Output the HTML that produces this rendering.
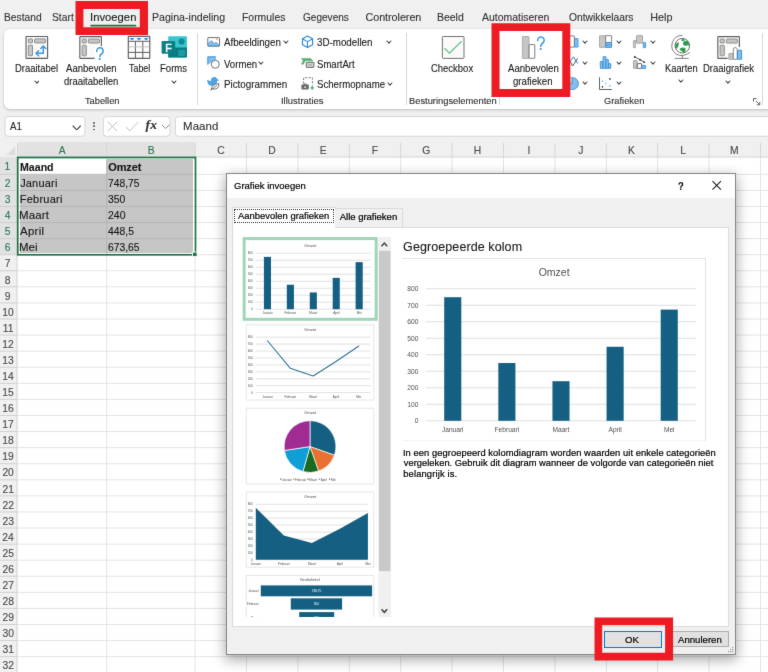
<!DOCTYPE html>
<html lang="nl">
<head>
<meta charset="utf-8">
<title>Grafiek invoegen - Aanbevolen grafieken</title>
<style>
html,body{margin:0;padding:0;}
body{width:768px;height:672px;overflow:hidden;position:relative;background:#f0f0f0;font-family:"Liberation Sans",sans-serif;color:#1c1c1c;}
div,span,svg{position:absolute;box-sizing:border-box;}
.t{white-space:pre;line-height:1;transform-origin:0 0;-webkit-text-stroke:0.12px currentColor;}
#app{left:0;top:0;width:768px;height:672px;overflow:hidden;background:#f0f0f0;will-change:transform;filter:url(#soft);}
.h{-webkit-text-stroke:0.2px currentColor;}

</style>
</head>
<body>
<svg width="0" height="0" style="position:absolute"><defs><filter id="soft" x="0" y="0" width="100%" height="100%" color-interpolation-filters="sRGB"><feConvolveMatrix order="3" kernelMatrix="0.01 0.06 0.01 0.06 0.72 0.06 0.01 0.06 0.01" edgeMode="duplicate" preserveAlpha="true"/></filter></defs></svg>
<div id="app">
<div style="left:0.00px;top:0.00px;width:768.00px;height:29.00px;background:#f0f0f0"></div>
<span class="t" style="left:3.68px;top:12px;font-size:10.8px;transform:scaleX(0.9513);color:#333;">Bestand</span>
<span class="t" style="left:52.04px;top:12px;font-size:10.8px;transform:scaleX(0.9533);color:#333;">Start</span>
<span class="t" style="left:89.69px;top:12px;font-size:10.8px;letter-spacing:0.025px;transform:scaleX(1.0400);color:#1a1a1a;">Invoegen</span>
<span class="t" style="left:151.85px;top:12px;font-size:10.8px;transform:scaleX(0.9817);color:#333;">Pagina-indeling</span>
<span class="t" style="left:241.97px;top:12px;font-size:10.8px;transform:scaleX(0.9642);color:#333;">Formules</span>
<span class="t" style="left:302.80px;top:12px;font-size:10.8px;transform:scaleX(0.9314);color:#333;">Gegevens</span>
<span class="t" style="left:365.46px;top:12px;font-size:10.8px;letter-spacing:-0.053px;color:#333;">Controleren</span>
<span class="t" style="left:437.16px;top:12px;font-size:10.8px;transform:scaleX(0.9694);color:#333;">Beeld</span>
<span class="t" style="left:482.30px;top:12px;font-size:10.8px;transform:scaleX(0.9670);color:#333;">Automatiseren</span>
<span class="t" style="left:568.84px;top:12px;font-size:10.8px;transform:scaleX(0.9513);color:#333;">Ontwikkelaars</span>
<span class="t" style="left:650.14px;top:12px;font-size:10.8px;letter-spacing:0.032px;color:#333;">Help</span>
<svg style="left:88px;top:23px" width="52" height="5" viewBox="88 23 52 5"><rect x="90.2" y="24.85" width="46.2" height="1.6" rx="0.8" fill="#0c7a3d"/></svg>
<div style="left:4.00px;top:28.70px;width:776.00px;height:80.50px;background:#fff;border-radius:6px;box-shadow:0 1px 3px rgba(0,0,0,.22)"></div>
<div style="left:196.80px;top:33.00px;width:1.00px;height:71.50px;background:#d6d6d6"></div>
<div style="left:406.20px;top:33.00px;width:1.00px;height:71.50px;background:#d6d6d6"></div>
<div style="left:499.20px;top:33.00px;width:1.00px;height:71.50px;background:#d6d6d6"></div>
<div style="left:761.80px;top:33.00px;width:1.00px;height:71.50px;background:#d6d6d6"></div>
<span class="t" style="left:15.04px;top:64px;font-size:10.2px;transform:scaleX(0.9258);">Draaitabel</span>
<svg style="left:33.55px;top:79.55px" width="5.90" height="4.10" viewBox="-1 -1 5.90 4.10"><path d="M0 0 L1.95 2.10 L3.90 0" fill="none" stroke="#3a3a3a" stroke-width="1.05" stroke-linecap="round" stroke-linejoin="round"/></svg>
<span class="t" style="left:66.30px;top:64px;font-size:10.2px;transform:scaleX(0.9389);">Aanbevolen</span>
<span class="t" style="left:63.92px;top:77px;font-size:10.2px;transform:scaleX(0.9307);">draaitabellen</span>
<span class="t" style="left:128.52px;top:64px;font-size:10.2px;transform:scaleX(0.8749);">Tabel</span>
<span class="t" style="left:160.23px;top:64px;font-size:10.2px;transform:scaleX(0.9378);">Forms</span>
<svg style="left:170.85px;top:79.55px" width="5.90" height="4.10" viewBox="-1 -1 5.90 4.10"><path d="M0 0 L1.95 2.10 L3.90 0" fill="none" stroke="#3a3a3a" stroke-width="1.05" stroke-linecap="round" stroke-linejoin="round"/></svg>
<span class="t" style="left:85.12px;top:96px;font-size:9.8px;transform:scaleX(0.9437);color:#2e2e2e;">Tabellen</span>
<span class="t" style="left:223.70px;top:38px;font-size:10.2px;transform:scaleX(0.9554);">Afbeeldingen</span>
<svg style="left:282.65px;top:39.75px" width="5.90" height="4.10" viewBox="-1 -1 5.90 4.10"><path d="M0 0 L1.95 2.10 L3.90 0" fill="none" stroke="#3a3a3a" stroke-width="1.05" stroke-linecap="round" stroke-linejoin="round"/></svg>
<span class="t" style="left:223.70px;top:60px;font-size:10.2px;transform:scaleX(0.9413);">Vormen</span>
<svg style="left:258.35px;top:60.75px" width="5.90" height="4.10" viewBox="-1 -1 5.90 4.10"><path d="M0 0 L1.95 2.10 L3.90 0" fill="none" stroke="#3a3a3a" stroke-width="1.05" stroke-linecap="round" stroke-linejoin="round"/></svg>
<span class="t" style="left:223.61px;top:80px;font-size:10.2px;transform:scaleX(0.9624);">Pictogrammen</span>
<span class="t" style="left:317.36px;top:38px;font-size:10.2px;transform:scaleX(0.9605);">3D-modellen</span>
<svg style="left:386.35px;top:39.75px" width="5.90" height="4.10" viewBox="-1 -1 5.90 4.10"><path d="M0 0 L1.95 2.10 L3.90 0" fill="none" stroke="#3a3a3a" stroke-width="1.05" stroke-linecap="round" stroke-linejoin="round"/></svg>
<span class="t" style="left:317.27px;top:60px;font-size:10.2px;transform:scaleX(0.9384);">SmartArt</span>
<span class="t" style="left:317.27px;top:80px;font-size:10.2px;transform:scaleX(0.9462);">Schermopname</span>
<svg style="left:386.65px;top:81.75px" width="5.90" height="4.10" viewBox="-1 -1 5.90 4.10"><path d="M0 0 L1.95 2.10 L3.90 0" fill="none" stroke="#3a3a3a" stroke-width="1.05" stroke-linecap="round" stroke-linejoin="round"/></svg>
<span class="t" style="left:280.85px;top:96px;font-size:9.8px;transform:scaleX(0.9629);color:#2e2e2e;">Illustraties</span>
<span class="t" style="left:431.23px;top:64px;font-size:10.2px;transform:scaleX(0.9297);">Checkbox</span>
<span class="t" style="left:409.25px;top:96px;font-size:9.8px;transform:scaleX(0.9517);color:#2e2e2e;">Besturingselementen</span>
<span class="t" style="left:507.70px;top:64px;font-size:10.2px;transform:scaleX(0.9445);">Aanbevolen</span>
<span class="t" style="left:513.32px;top:77px;font-size:10.2px;transform:scaleX(0.9431);">grafieken</span>
<svg style="left:582.35px;top:39.75px" width="5.90" height="4.10" viewBox="-1 -1 5.90 4.10"><path d="M0 0 L1.95 2.10 L3.90 0" fill="none" stroke="#3a3a3a" stroke-width="1.05" stroke-linecap="round" stroke-linejoin="round"/></svg>
<svg style="left:616.05px;top:39.75px" width="5.90" height="4.10" viewBox="-1 -1 5.90 4.10"><path d="M0 0 L1.95 2.10 L3.90 0" fill="none" stroke="#3a3a3a" stroke-width="1.05" stroke-linecap="round" stroke-linejoin="round"/></svg>
<svg style="left:582.35px;top:60.75px" width="5.90" height="4.10" viewBox="-1 -1 5.90 4.10"><path d="M0 0 L1.95 2.10 L3.90 0" fill="none" stroke="#3a3a3a" stroke-width="1.05" stroke-linecap="round" stroke-linejoin="round"/></svg>
<svg style="left:616.05px;top:60.75px" width="5.90" height="4.10" viewBox="-1 -1 5.90 4.10"><path d="M0 0 L1.95 2.10 L3.90 0" fill="none" stroke="#3a3a3a" stroke-width="1.05" stroke-linecap="round" stroke-linejoin="round"/></svg>
<svg style="left:582.35px;top:81.45px" width="5.90" height="4.10" viewBox="-1 -1 5.90 4.10"><path d="M0 0 L1.95 2.10 L3.90 0" fill="none" stroke="#3a3a3a" stroke-width="1.05" stroke-linecap="round" stroke-linejoin="round"/></svg>
<svg style="left:616.05px;top:81.45px" width="5.90" height="4.10" viewBox="-1 -1 5.90 4.10"><path d="M0 0 L1.95 2.10 L3.90 0" fill="none" stroke="#3a3a3a" stroke-width="1.05" stroke-linecap="round" stroke-linejoin="round"/></svg>
<svg style="left:649.65px;top:39.75px" width="5.90" height="4.10" viewBox="-1 -1 5.90 4.10"><path d="M0 0 L1.95 2.10 L3.90 0" fill="none" stroke="#3a3a3a" stroke-width="1.05" stroke-linecap="round" stroke-linejoin="round"/></svg>
<svg style="left:649.65px;top:60.75px" width="5.90" height="4.10" viewBox="-1 -1 5.90 4.10"><path d="M0 0 L1.95 2.10 L3.90 0" fill="none" stroke="#3a3a3a" stroke-width="1.05" stroke-linecap="round" stroke-linejoin="round"/></svg>
<span class="t" style="left:604.23px;top:96px;font-size:9.8px;transform:scaleX(0.9493);color:#2e2e2e;">Grafieken</span>
<span class="t" style="left:664.96px;top:64px;font-size:10.2px;transform:scaleX(0.9129);">Kaarten</span>
<svg style="left:678.05px;top:79.35px" width="5.90" height="4.10" viewBox="-1 -1 5.90 4.10"><path d="M0 0 L1.95 2.10 L3.90 0" fill="none" stroke="#3a3a3a" stroke-width="1.05" stroke-linecap="round" stroke-linejoin="round"/></svg>
<span class="t" style="left:702.54px;top:64px;font-size:10.2px;transform:scaleX(0.9295);">Draaigrafiek</span>
<svg style="left:725.05px;top:79.95px" width="5.90" height="4.10" viewBox="-1 -1 5.90 4.10"><path d="M0 0 L1.95 2.10 L3.90 0" fill="none" stroke="#3a3a3a" stroke-width="1.05" stroke-linecap="round" stroke-linejoin="round"/></svg>
<svg style="left:752.5px;top:98px" width="8" height="8" viewBox="0 0 8 8"><path d="M0.5 3.5V0.5H3.5 M3 3l3.6 3.6 M6.8 3.8v3h-3" fill="none" stroke="#555" stroke-width="0.9"/></svg>
<svg style="left:0;top:0" width="768" height="112" viewBox="0 0 768 112"><rect x="26.05" y="36.45" width="21.55" height="21.85" rx="0.6" fill="#fafafa" stroke="#5e5e5e" stroke-width="1.15"/><rect x="28.30" y="38.90" width="4.20" height="4.00" rx="0.6" fill="#c8c6c4" stroke="#868482" stroke-width="0.9"/><rect x="34.60" y="38.90" width="11.00" height="4.00" rx="0.6" fill="#c8c6c4" stroke="#868482" stroke-width="0.9"/><rect x="28.30" y="45.30" width="4.20" height="10.40" rx="0.6" fill="#c8c6c4" stroke="#868482" stroke-width="0.9"/><path d="M36 53.3 H43.3 V46.2 M38.6 50.8 L36 53.3 L38.6 55.8 M40.8 48.6 L43.3 46.1 L45.8 48.6" fill="none" stroke="#3a96dd" stroke-width="1.45" stroke-linecap="round" stroke-linejoin="round"/><rect x="79.85" y="36.55" width="21.55" height="21.85" rx="0.6" fill="#fafafa" stroke="#5e5e5e" stroke-width="1.15"/><rect x="82.10" y="39.00" width="4.20" height="4.00" rx="0.6" fill="#c8c6c4" stroke="#868482" stroke-width="0.9"/><rect x="88.40" y="39.00" width="11.00" height="4.00" rx="0.6" fill="#c8c6c4" stroke="#868482" stroke-width="0.9"/><rect x="82.10" y="45.40" width="4.20" height="10.40" rx="0.6" fill="#c8c6c4" stroke="#868482" stroke-width="0.9"/><rect x="94.60" y="46.00" width="10.40" height="14.60" rx="0" fill="#fff"/><path d="M96.75 51.40 A3.25 3.25 0 1 1 102.34 53.14 Q100.00 54.72 99.70 56.57" fill="none" stroke="#3a96dd" stroke-width="1.5" stroke-linecap="round"/><circle cx="99.70" cy="59.10" r="1.05" fill="#3a96dd"/><rect x="128.30" y="36.40" width="21.50" height="21.90" rx="0.5" fill="#fdfdfd" stroke="#5e5e5e" stroke-width="1.15"/><path d="M135.4 41.3 V58.3" fill="none" stroke="#5e5e5e" stroke-width="1.0" /><path d="M142.8 41.3 V58.3" fill="none" stroke="#5e5e5e" stroke-width="1.0" /><path d="M128.3 41.3 H149.8" fill="none" stroke="#5e5e5e" stroke-width="1.0" /><path d="M128.3 52.4 H149.8" fill="none" stroke="#5e5e5e" stroke-width="1.0" /><path d="M128.8 46.85 H149.3" fill="none" stroke="#bdbdbd" stroke-width="0.9" /><path d="M129.5 37.9 H134.5 L132 40.4 Z" fill="#2b88d8" /><path d="M136.5 37.9 H141.5 L139 40.4 Z" fill="#2b88d8" /><path d="M143.6 37.9 H148.6 L146.1 40.4 Z" fill="#2b88d8" /><rect x="168.20" y="36.20" width="18.80" height="21.40" rx="1.2" fill="#38c6d1"/><path d="M168.2 47.4 H187 V56.4 Q187 57.6 185.8 57.6 H169.4 Q168.2 57.6 168.2 56.4 Z" fill="#077d82" /><circle cx="181.6" cy="41.6" r="3.1" fill="#0f8a90"/><rect x="178.30" y="49.80" width="6.80" height="6.10" rx="0.3" fill="#1b9da3"/><rect x="161.60" y="41.00" width="13.60" height="12.70" rx="1.2" fill="#0b7f85"/><text x="168.4" y="51.5" font-size="10.5" font-weight="400" stroke="#fff" stroke-width="0.45" fill="#fff" text-anchor="middle" font-family="Liberation Sans, sans-serif">F</text><rect x="207.80" y="37.60" width="11.70" height="8.60" rx="0.5" fill="#fff" stroke="#5c5c5c" stroke-width="0.9"/><path d="M208.3 45.7 V43.4 L211.2 40.5 L214.4 43.6 L216 42.2 L219 45 V45.7 Z" fill="#83beec" stroke="#2b88d8" stroke-width="0.6" stroke-linejoin="round"/><circle cx="216.9" cy="39.4" r="0.8" fill="#f7894a"/><path d="M207.8 64.5 V56.8 H215.9 V60" fill="#83beec" /><path d="M207.8 64.7 V56.8 H215.9" fill="none" stroke="#2b88d8" stroke-width="0.9" /><circle cx="215.3" cy="64.3" r="4" fill="#fff" stroke="#6a6a6a" stroke-width="0.95"/><path d="M207.6 80.2 Q208.8 81.6 211.4 81.2 Q211 77.4 214.4 77.3 Q216.8 77.4 216.9 79.4 L218.6 79.9 L216.8 81 Q216.6 85.6 212.2 85.6 Q207.6 85.6 207.6 80.2 Z" fill="#4fa3e3" stroke="#2b88d8" stroke-width="0.5" stroke-linejoin="round"/><path d="M211.3 89.6 Q211.2 84.2 218.9 83.6 Q219.2 89.8 212.6 89 Z" fill="#fff" stroke="#5a5a5a" stroke-width="0.85" stroke-linejoin="round"/><path d="M210.6 90.2 L216.6 85.6" fill="none" stroke="#5a5a5a" stroke-width="0.8" stroke-linecap="round"/><path d="M307.5 36.1 L312.6 38.8 V44.8 L307.5 47.6 L302.5 44.8 V38.8 Z" fill="#fff" stroke="#2b88d8" stroke-width="1.15" stroke-linejoin="round"/><path d="M302.7 39 L307.5 41.6 L312.4 39 M307.5 41.6 V47.3" fill="none" stroke="#2b88d8" stroke-width="1.05" stroke-linejoin="round"/><path d="M301.4 58.4 H310.6 L313 60.8 H305.2 L303.4 64.2 H301.4 L303.2 60.8 Z" fill="#55b36f" stroke="#3b9a56" stroke-width="0.4" stroke-linejoin="round"/><rect x="306.30" y="62.30" width="7.60" height="5.10" rx="0.5" fill="#d6d4d2" stroke="#5a5a5a" stroke-width="0.9"/><path d="M308.4 64.9 H311.8" fill="none" stroke="#777" stroke-width="0.7" /><path d="M303.6 83.6 V77.7 H312.4 V85.4" fill="none" stroke="#666" stroke-width="0.85" stroke-dasharray="2.2 1.4"/><rect x="301.40" y="84.60" width="7.40" height="5.00" rx="0.8" fill="#6a6a6a"/><path d="M303.4 84.7 L304 83.6 H306.2 L306.8 84.7 Z" fill="#6a6a6a" /><circle cx="305.1" cy="87.1" r="1.45" fill="#d8d8d8" stroke="#444" stroke-width="0.5"/><path d="M312.2 86.1 V89.7 M310.4 87.9 H314" fill="none" stroke="#4caf6e" stroke-width="1.3" /><rect x="442.40" y="36.50" width="21.60" height="21.90" rx="0.8" fill="#fafafa" stroke="#737373" stroke-width="1.0"/><path d="M444.7 48.6 L449.5 53.3 L461.3 41.6" fill="none" stroke="#6fc690" stroke-width="1.35" stroke-linecap="round" stroke-linejoin="round"/><rect x="522.40" y="36.50" width="6.60" height="21.90" rx="0.5" fill="#c8c6c4" stroke="#a3a19f" stroke-width="0.8"/><rect x="529.10" y="44.60" width="5.70" height="13.70" rx="0.4" fill="#fff" stroke="#6e6e6e" stroke-width="0.9"/><path d="M537.75 40.70 A3.25 3.25 0 1 1 543.34 42.44 Q541.00 44.44 540.70 46.39" fill="none" stroke="#3a96dd" stroke-width="1.5" stroke-linecap="round"/><circle cx="540.70" cy="49.10" r="1.05" fill="#3a96dd"/><rect x="568.50" y="35.90" width="5.90" height="11.20" rx="0.3" fill="#fff" stroke="#6e6e6e" stroke-width="0.9"/><rect x="574.50" y="38.60" width="3.50" height="8.50" rx="0.3" fill="#83beec" stroke="#2b88d8" stroke-width="0.8"/><path d="M569.6 62.4 L573.4 56.8 L577.8 63.6" fill="none" stroke="#2b88d8" stroke-width="1.0" stroke-linejoin="round"/><path d="M569.8 60.6 L572.6 66 L577.6 58.4" fill="none" stroke="#444" stroke-width="0.9" stroke-linejoin="round"/><path d="M572.4 83.6 V77.6 A6 6 0 1 1 566.4 83.6 Z" fill="#83beec" stroke="#2b88d8" stroke-width="0.8" /><path d="M571.2 82.4 V77 A5.6 5.6 0 0 0 566 82.4 Z" fill="#e8e8e8" stroke="#777" stroke-width="0.7" /><rect x="599.50" y="35.70" width="6.00" height="11.70" rx="0.4" fill="#c8c6c4" stroke="#a3a19f" stroke-width="0.8"/><rect x="605.60" y="35.70" width="6.00" height="6.80" rx="0.3" fill="#fff" stroke="#6e6e6e" stroke-width="0.85"/><rect x="605.60" y="42.60" width="6.00" height="4.80" rx="0.3" fill="#83beec" stroke="#2b88d8" stroke-width="0.85"/><path d="M605.6 45 H611.6" fill="none" stroke="#2b88d8" stroke-width="0.7" /><rect x="600.30" y="61.40" width="2.70" height="7.00" rx="0.4" fill="#83beec" stroke="#2b88d8" stroke-width="0.8"/><rect x="603.00" y="56.60" width="2.90" height="11.80" rx="0.4" fill="#83beec" stroke="#2b88d8" stroke-width="0.8"/><rect x="605.90" y="59.40" width="2.50" height="9.00" rx="0.4" fill="#83beec" stroke="#2b88d8" stroke-width="0.8"/><rect x="608.40" y="63.60" width="2.40" height="4.80" rx="0.4" fill="#83beec" stroke="#2b88d8" stroke-width="0.8"/><path d="M599.5 77.2 V89.5 H611.9" fill="none" stroke="#5a5a5a" stroke-width="0.95" /><circle cx="609.9" cy="78.9" r="0.85" fill="#333"/><circle cx="602.5" cy="86.8" r="0.85" fill="#333"/><circle cx="602.5" cy="81.1" r="0.85" fill="#83beec"/><circle cx="605.8" cy="83.5" r="0.85" fill="#83beec"/><circle cx="609.9" cy="85.9" r="0.85" fill="#83beec"/><rect x="633.40" y="40.50" width="2.20" height="7.20" rx="0.3" fill="#c8c6c4" stroke="#9a9896" stroke-width="0.7"/><rect x="636.50" y="35.60" width="6.10" height="7.60" rx="0.5" fill="#c8c6c4" stroke="#9a9896" stroke-width="0.8"/><path d="M635.6 40.5 H637" fill="none" stroke="#9a9896" stroke-width="0.7" /><rect x="643.30" y="42.50" width="2.30" height="5.20" rx="0.4" fill="#83beec" stroke="#2b88d8" stroke-width="0.8"/><rect x="633.50" y="60.60" width="3.60" height="7.80" rx="0.3" fill="#c8c6c4" stroke="#9a9896" stroke-width="0.8"/><rect x="637.30" y="63.60" width="4.30" height="4.80" rx="0.3" fill="#fff" stroke="#5a5a5a" stroke-width="0.9"/><rect x="641.80" y="65.40" width="3.90" height="3.00" rx="0.3" fill="#83beec" stroke="#2b88d8" stroke-width="0.8"/><path d="M634.8 57 L640 59.7 L644.2 62.1" fill="none" stroke="#333" stroke-width="0.8" /><circle cx="634.8" cy="57" r="0.95" fill="#333"/><circle cx="640" cy="59.7" r="0.95" fill="#333"/><circle cx="644.2" cy="62.1" r="0.95" fill="#333"/><circle cx="682.3" cy="45.7" r="7.3" fill="#fff" stroke="#6a6a6a" stroke-width="1.0"/><path d="M675.2 45.8 Q675.6 43 678.8 42 Q679.2 44.6 678 46.8 Q677 49.2 676.2 48.6 Q675.2 47.4 675.2 45.8 Z" fill="#2f9c4c" /><path d="M681.8 38.7 Q685 38.4 684.6 40.4 Q683.2 41.8 681.6 40.8 Z" fill="#2f9c4c" /><path d="M683.2 42.2 Q685.6 39.8 688 41.4 Q689.6 43.6 689.4 46 Q687.6 44.6 686 45.8 Q683.8 46 683 44.2 Z" fill="#2f9c4c" /><path d="M679.6 48.8 Q682.6 46.8 685.4 48.2 Q686.4 50.2 684.6 52.8 Q683 53.2 682.2 51.6 Q680 50.8 679.6 48.8 Z" fill="#2f9c4c" /><path d="M682 35.3 A10.4 10.4 0 0 0 676 54 Q682.4 57.8 689.7 52.6" fill="none" stroke="#7a7a7a" stroke-width="0.95" stroke-linecap="round"/><path d="M682.3 55.6 V58.4 M675.2 58.4 H688.3" fill="none" stroke="#7a7a7a" stroke-width="0.95" stroke-linecap="round"/><rect x="717.85" y="36.55" width="21.55" height="21.85" rx="0.6" fill="#fafafa" stroke="#5e5e5e" stroke-width="1.15"/><rect x="720.10" y="39.00" width="4.20" height="4.00" rx="0.6" fill="#c8c6c4" stroke="#868482" stroke-width="0.9"/><rect x="726.40" y="39.00" width="11.00" height="4.00" rx="0.6" fill="#c8c6c4" stroke="#868482" stroke-width="0.9"/><rect x="720.10" y="45.40" width="4.20" height="10.40" rx="0.6" fill="#c8c6c4" stroke="#868482" stroke-width="0.9"/><rect x="727.60" y="46.60" width="15.00" height="13.80" rx="0" fill="#fff"/><rect x="728.80" y="53.50" width="4.20" height="5.80" rx="0.4" fill="#c8c6c4" stroke="#9a9896" stroke-width="0.8"/><path d="M733.3 59.3 V49.4 Q733.3 47.6 735.2 47.6 Q737.2 47.6 737.2 49.4 V59.3 Z" fill="#fff" stroke="#7a7a7a" stroke-width="0.9" /><rect x="737.60" y="50.20" width="4.00" height="9.10" rx="0.5" fill="#83beec" stroke="#2b88d8" stroke-width="0.9"/><path d="M739.4 46.6 V45" fill="none" stroke="#5e5e5e" stroke-width="0.95" /></svg>
<svg style="left:0;top:112px" width="768" height="30" viewBox="0 112 768 30"><rect x="5.00" y="116.60" width="79.90" height="19.65" rx="3" fill="#fff" stroke="#d6d6d6" stroke-width="1"/><rect x="103.30" y="116.60" width="66.60" height="19.65" rx="3" fill="#fff" stroke="#d6d6d6" stroke-width="1"/><rect x="175.40" y="116.60" width="614.10" height="19.65" rx="3" fill="#fff" stroke="#d6d6d6" stroke-width="1"/></svg>
<span class="t" style="left:9.50px;top:121px;font-size:11px;transform:scaleX(0.8805);color:#262626;">A1</span>
<svg style="left:72.10px;top:124.55px" width="9.40" height="5.90" viewBox="-1 -1 9.40 5.90"><path d="M0 0 L3.70 3.90 L7.40 0" fill="none" stroke="#444" stroke-width="1.1" stroke-linecap="round" stroke-linejoin="round"/></svg>
<div style="left:93.30px;top:122.00px;width:1.50px;height:1.50px;background:#555;border-radius:1px"></div>
<div style="left:93.30px;top:125.40px;width:1.50px;height:1.50px;background:#555;border-radius:1px"></div>
<div style="left:93.30px;top:128.80px;width:1.50px;height:1.50px;background:#555;border-radius:1px"></div>
<svg style="left:107px;top:121px" width="11" height="11" viewBox="0 0 11 11"><path d="M0.8 0.8 L10.2 10.2 M10.2 0.8 L0.8 10.2" stroke="#c2c2c2" stroke-width="1" fill="none"/></svg>
<svg style="left:125px;top:121px" width="14" height="11" viewBox="0 0 14 11"><path d="M0.8 5.8 L4.8 9.8 L13.2 1" stroke="#c2c2c2" stroke-width="1" fill="none"/></svg>
<span class="t" style="left:145.6px;top:118px;font-family:'Liberation Serif',serif;font-style:italic;font-weight:700;font-size:13.5px;color:#333;letter-spacing:0.2px">fx</span>
<svg style="left:160.50px;top:123.80px" width="9.00" height="5.60" viewBox="-1 -1 9.00 5.60"><path d="M0 0 L3.50 3.60 L7.00 0" fill="none" stroke="#8a8a8a" stroke-width="1" stroke-linecap="round" stroke-linejoin="round"/></svg>
<span class="t" style="left:182.78px;top:121px;font-size:11px;letter-spacing:0.105px;transform:scaleX(1.0400);color:#303030;">Maand</span>
<div style="left:0.00px;top:142.30px;width:768.00px;height:529.70px;background:#fff"></div>
<div style="left:0.00px;top:142.30px;width:768.00px;height:15.00px;background:#f0f0f0"></div>
<div style="left:17.50px;top:142.30px;width:177.60px;height:15.00px;background:#e2e2e2"></div>
<div style="left:0.00px;top:157.30px;width:17.40px;height:514.70px;background:#f0f0f0"></div>
<div style="left:0.00px;top:157.30px;width:17.40px;height:97.39px;background:#e2e2e2"></div>
<svg style="left:5px;top:145px" width="12" height="11" viewBox="5 145 12 11"><path d="M15.4 146 V155.2 H6.2 Z" fill="#dddddd"/></svg>
<div style="left:19.60px;top:174.70px;width:173.80px;height:78.80px;background:#c6c6c6"></div>
<div style="left:107.20px;top:159.15px;width:86.20px;height:15.65px;background:#c6c6c6"></div>
<svg style="left:0;top:0" width="768" height="672" viewBox="0 0 768 672" stroke-width="1"><line x1="0" y1="174.30" x2="17" y2="174.30" stroke="#d0d0d0"/><line x1="19.6" y1="174.30" x2="193.4" y2="174.30" stroke="#b6b6b6"/><line x1="196" y1="174.30" x2="768" y2="174.30" stroke="#e4e4e4"/><line x1="0" y1="190.38" x2="17" y2="190.38" stroke="#d0d0d0"/><line x1="19.6" y1="190.38" x2="193.4" y2="190.38" stroke="#b6b6b6"/><line x1="196" y1="190.38" x2="768" y2="190.38" stroke="#e4e4e4"/><line x1="0" y1="206.46" x2="17" y2="206.46" stroke="#d0d0d0"/><line x1="19.6" y1="206.46" x2="193.4" y2="206.46" stroke="#b6b6b6"/><line x1="196" y1="206.46" x2="768" y2="206.46" stroke="#e4e4e4"/><line x1="0" y1="222.54" x2="17" y2="222.54" stroke="#d0d0d0"/><line x1="19.6" y1="222.54" x2="193.4" y2="222.54" stroke="#b6b6b6"/><line x1="196" y1="222.54" x2="768" y2="222.54" stroke="#e4e4e4"/><line x1="0" y1="238.62" x2="17" y2="238.62" stroke="#d0d0d0"/><line x1="19.6" y1="238.62" x2="193.4" y2="238.62" stroke="#b6b6b6"/><line x1="196" y1="238.62" x2="768" y2="238.62" stroke="#e4e4e4"/><line x1="0" y1="254.69" x2="17" y2="254.69" stroke="#d0d0d0"/><line x1="17.4" y1="254.69" x2="768" y2="254.69" stroke="#e4e4e4"/><line x1="0" y1="270.77" x2="17" y2="270.77" stroke="#d0d0d0"/><line x1="17.4" y1="270.77" x2="768" y2="270.77" stroke="#e4e4e4"/><line x1="0" y1="286.85" x2="17" y2="286.85" stroke="#d0d0d0"/><line x1="17.4" y1="286.85" x2="768" y2="286.85" stroke="#e4e4e4"/><line x1="0" y1="302.93" x2="17" y2="302.93" stroke="#d0d0d0"/><line x1="17.4" y1="302.93" x2="768" y2="302.93" stroke="#e4e4e4"/><line x1="0" y1="319.01" x2="17" y2="319.01" stroke="#d0d0d0"/><line x1="17.4" y1="319.01" x2="768" y2="319.01" stroke="#e4e4e4"/><line x1="0" y1="335.09" x2="17" y2="335.09" stroke="#d0d0d0"/><line x1="17.4" y1="335.09" x2="768" y2="335.09" stroke="#e4e4e4"/><line x1="0" y1="351.17" x2="17" y2="351.17" stroke="#d0d0d0"/><line x1="17.4" y1="351.17" x2="768" y2="351.17" stroke="#e4e4e4"/><line x1="0" y1="367.25" x2="17" y2="367.25" stroke="#d0d0d0"/><line x1="17.4" y1="367.25" x2="768" y2="367.25" stroke="#e4e4e4"/><line x1="0" y1="383.33" x2="17" y2="383.33" stroke="#d0d0d0"/><line x1="17.4" y1="383.33" x2="768" y2="383.33" stroke="#e4e4e4"/><line x1="0" y1="399.40" x2="17" y2="399.40" stroke="#d0d0d0"/><line x1="17.4" y1="399.40" x2="768" y2="399.40" stroke="#e4e4e4"/><line x1="0" y1="415.48" x2="17" y2="415.48" stroke="#d0d0d0"/><line x1="17.4" y1="415.48" x2="768" y2="415.48" stroke="#e4e4e4"/><line x1="0" y1="431.56" x2="17" y2="431.56" stroke="#d0d0d0"/><line x1="17.4" y1="431.56" x2="768" y2="431.56" stroke="#e4e4e4"/><line x1="0" y1="447.64" x2="17" y2="447.64" stroke="#d0d0d0"/><line x1="17.4" y1="447.64" x2="768" y2="447.64" stroke="#e4e4e4"/><line x1="0" y1="463.72" x2="17" y2="463.72" stroke="#d0d0d0"/><line x1="17.4" y1="463.72" x2="768" y2="463.72" stroke="#e4e4e4"/><line x1="0" y1="479.80" x2="17" y2="479.80" stroke="#d0d0d0"/><line x1="17.4" y1="479.80" x2="768" y2="479.80" stroke="#e4e4e4"/><line x1="0" y1="495.88" x2="17" y2="495.88" stroke="#d0d0d0"/><line x1="17.4" y1="495.88" x2="768" y2="495.88" stroke="#e4e4e4"/><line x1="0" y1="511.96" x2="17" y2="511.96" stroke="#d0d0d0"/><line x1="17.4" y1="511.96" x2="768" y2="511.96" stroke="#e4e4e4"/><line x1="0" y1="528.04" x2="17" y2="528.04" stroke="#d0d0d0"/><line x1="17.4" y1="528.04" x2="768" y2="528.04" stroke="#e4e4e4"/><line x1="0" y1="544.12" x2="17" y2="544.12" stroke="#d0d0d0"/><line x1="17.4" y1="544.12" x2="768" y2="544.12" stroke="#e4e4e4"/><line x1="0" y1="560.20" x2="17" y2="560.20" stroke="#d0d0d0"/><line x1="17.4" y1="560.20" x2="768" y2="560.20" stroke="#e4e4e4"/><line x1="0" y1="576.27" x2="17" y2="576.27" stroke="#d0d0d0"/><line x1="17.4" y1="576.27" x2="768" y2="576.27" stroke="#e4e4e4"/><line x1="0" y1="592.35" x2="17" y2="592.35" stroke="#d0d0d0"/><line x1="17.4" y1="592.35" x2="768" y2="592.35" stroke="#e4e4e4"/><line x1="0" y1="608.43" x2="17" y2="608.43" stroke="#d0d0d0"/><line x1="17.4" y1="608.43" x2="768" y2="608.43" stroke="#e4e4e4"/><line x1="0" y1="624.51" x2="17" y2="624.51" stroke="#d0d0d0"/><line x1="17.4" y1="624.51" x2="768" y2="624.51" stroke="#e4e4e4"/><line x1="0" y1="640.59" x2="17" y2="640.59" stroke="#d0d0d0"/><line x1="17.4" y1="640.59" x2="768" y2="640.59" stroke="#e4e4e4"/><line x1="0" y1="656.67" x2="17" y2="656.67" stroke="#d0d0d0"/><line x1="17.4" y1="656.67" x2="768" y2="656.67" stroke="#e4e4e4"/><line x1="0" y1="672.75" x2="17" y2="672.75" stroke="#d0d0d0"/><line x1="17.4" y1="672.75" x2="768" y2="672.75" stroke="#e4e4e4"/><line x1="17.50" y1="143" x2="17.50" y2="157" stroke="#d6d6d6"/><line x1="106.70" y1="143" x2="106.70" y2="157" stroke="#d6d6d6"/><line x1="106.70" y1="159.15" x2="106.70" y2="253.79" stroke="#b6b6b6"/><line x1="106.70" y1="255.69" x2="106.70" y2="672" stroke="#e4e4e4"/><line x1="195.10" y1="143" x2="195.10" y2="157" stroke="#d6d6d6"/><line x1="195.10" y1="255.69" x2="195.10" y2="672" stroke="#e4e4e4"/><line x1="246.50" y1="143" x2="246.50" y2="157" stroke="#d6d6d6"/><line x1="246.50" y1="157" x2="246.50" y2="672" stroke="#e4e4e4"/><line x1="297.90" y1="143" x2="297.90" y2="157" stroke="#d6d6d6"/><line x1="297.90" y1="157" x2="297.90" y2="672" stroke="#e4e4e4"/><line x1="349.30" y1="143" x2="349.30" y2="157" stroke="#d6d6d6"/><line x1="349.30" y1="157" x2="349.30" y2="672" stroke="#e4e4e4"/><line x1="400.70" y1="143" x2="400.70" y2="157" stroke="#d6d6d6"/><line x1="400.70" y1="157" x2="400.70" y2="672" stroke="#e4e4e4"/><line x1="452.10" y1="143" x2="452.10" y2="157" stroke="#d6d6d6"/><line x1="452.10" y1="157" x2="452.10" y2="672" stroke="#e4e4e4"/><line x1="503.50" y1="143" x2="503.50" y2="157" stroke="#d6d6d6"/><line x1="503.50" y1="157" x2="503.50" y2="672" stroke="#e4e4e4"/><line x1="554.90" y1="143" x2="554.90" y2="157" stroke="#d6d6d6"/><line x1="554.90" y1="157" x2="554.90" y2="672" stroke="#e4e4e4"/><line x1="606.30" y1="143" x2="606.30" y2="157" stroke="#d6d6d6"/><line x1="606.30" y1="157" x2="606.30" y2="672" stroke="#e4e4e4"/><line x1="657.70" y1="143" x2="657.70" y2="157" stroke="#d6d6d6"/><line x1="657.70" y1="157" x2="657.70" y2="672" stroke="#e4e4e4"/><line x1="709.10" y1="143" x2="709.10" y2="157" stroke="#d6d6d6"/><line x1="709.10" y1="157" x2="709.10" y2="672" stroke="#e4e4e4"/><line x1="760.50" y1="143" x2="760.50" y2="157" stroke="#d6d6d6"/><line x1="760.50" y1="157" x2="760.50" y2="672" stroke="#e4e4e4"/><line x1="811.90" y1="143" x2="811.90" y2="157" stroke="#d6d6d6"/><line x1="811.90" y1="157" x2="811.90" y2="672" stroke="#e4e4e4"/><line x1="17.4" y1="157" x2="768" y2="157" stroke="#d4d4d4"/><line x1="17" y1="157" x2="17" y2="672" stroke="#d0d0d0"/></svg>
<span class="t" style="left:58.85px;top:146px;font-size:10.3px;color:#257a52;">A</span>
<span class="t" style="left:147.72px;top:146px;font-size:10.3px;color:#257a52;">B</span>
<span class="t" style="left:217.21px;top:146px;font-size:10.3px;color:#4a4a4a;">C</span>
<span class="t" style="left:268.31px;top:146px;font-size:10.3px;color:#4a4a4a;">D</span>
<span class="t" style="left:319.87px;top:146px;font-size:10.3px;color:#4a4a4a;">E</span>
<span class="t" style="left:371.63px;top:146px;font-size:10.3px;color:#4a4a4a;">F</span>
<span class="t" style="left:422.31px;top:146px;font-size:10.3px;color:#4a4a4a;">G</span>
<span class="t" style="left:473.87px;top:146px;font-size:10.3px;color:#4a4a4a;">H</span>
<span class="t" style="left:527.56px;top:146px;font-size:10.3px;color:#4a4a4a;">I</span>
<span class="t" style="left:578.21px;top:146px;font-size:10.3px;color:#4a4a4a;">J</span>
<span class="t" style="left:627.89px;top:146px;font-size:10.3px;color:#4a4a4a;">K</span>
<span class="t" style="left:680.18px;top:146px;font-size:10.3px;color:#4a4a4a;">L</span>
<span class="t" style="left:730.00px;top:146px;font-size:10.3px;color:#4a4a4a;">M</span>
<span class="t" style="left:4.59px;top:162px;font-size:10.3px;color:#257a52;">1</span>
<span class="t" style="left:4.72px;top:179px;font-size:10.3px;color:#257a52;">2</span>
<span class="t" style="left:4.77px;top:195px;font-size:10.3px;color:#257a52;">3</span>
<span class="t" style="left:4.77px;top:211px;font-size:10.3px;color:#257a52;">4</span>
<span class="t" style="left:4.74px;top:227px;font-size:10.3px;color:#257a52;">5</span>
<span class="t" style="left:4.69px;top:243px;font-size:10.3px;color:#257a52;">6</span>
<span class="t" style="left:4.72px;top:259px;font-size:10.3px;color:#4a4a4a;">7</span>
<span class="t" style="left:4.74px;top:276px;font-size:10.3px;color:#4a4a4a;">8</span>
<span class="t" style="left:4.74px;top:292px;font-size:10.3px;color:#4a4a4a;">9</span>
<span class="t" style="left:2.27px;top:308px;font-size:10.3px;color:#4a4a4a;">10</span>
<span class="t" style="left:2.71px;top:324px;font-size:10.3px;color:#4a4a4a;">11</span>
<span class="t" style="left:2.32px;top:340px;font-size:10.3px;color:#4a4a4a;">12</span>
<span class="t" style="left:2.30px;top:356px;font-size:10.3px;color:#4a4a4a;">13</span>
<span class="t" style="left:2.22px;top:372px;font-size:10.3px;color:#4a4a4a;">14</span>
<span class="t" style="left:2.30px;top:388px;font-size:10.3px;color:#4a4a4a;">15</span>
<span class="t" style="left:2.30px;top:404px;font-size:10.3px;color:#4a4a4a;">16</span>
<span class="t" style="left:2.32px;top:420px;font-size:10.3px;color:#4a4a4a;">17</span>
<span class="t" style="left:2.30px;top:436px;font-size:10.3px;color:#4a4a4a;">18</span>
<span class="t" style="left:2.32px;top:452px;font-size:10.3px;color:#4a4a4a;">19</span>
<span class="t" style="left:2.40px;top:468px;font-size:10.3px;color:#4a4a4a;">20</span>
<span class="t" style="left:2.45px;top:485px;font-size:10.3px;color:#4a4a4a;">21</span>
<span class="t" style="left:2.45px;top:501px;font-size:10.3px;color:#4a4a4a;">22</span>
<span class="t" style="left:2.43px;top:517px;font-size:10.3px;color:#4a4a4a;">23</span>
<span class="t" style="left:2.35px;top:533px;font-size:10.3px;color:#4a4a4a;">24</span>
<span class="t" style="left:2.43px;top:549px;font-size:10.3px;color:#4a4a4a;">25</span>
<span class="t" style="left:2.43px;top:565px;font-size:10.3px;color:#4a4a4a;">26</span>
<span class="t" style="left:2.45px;top:581px;font-size:10.3px;color:#4a4a4a;">27</span>
<span class="t" style="left:2.43px;top:597px;font-size:10.3px;color:#4a4a4a;">28</span>
<span class="t" style="left:2.45px;top:613px;font-size:10.3px;color:#4a4a4a;">29</span>
<span class="t" style="left:2.48px;top:629px;font-size:10.3px;color:#4a4a4a;">30</span>
<span class="t" style="left:2.53px;top:645px;font-size:10.3px;color:#4a4a4a;">31</span>
<span class="t" style="left:2.53px;top:661px;font-size:10.3px;color:#4a4a4a;">32</span>
<span class="t" style="left:19.71px;top:162px;font-size:11px;transform:scaleX(0.9641);color:#161616;font-weight:700;">Maand</span>
<span class="t" style="left:108.16px;top:162px;font-size:11px;letter-spacing:-0.072px;color:#161616;font-weight:700;">Omzet</span>
<span class="t" style="left:20.14px;top:178px;font-size:11px;letter-spacing:0.188px;color:#161616;">Januari</span>
<span class="t" style="left:108.08px;top:178px;font-size:11px;transform:scaleX(0.9374);color:#161616;">748,75</span>
<span class="t" style="left:19.82px;top:194px;font-size:11px;letter-spacing:0.223px;color:#161616;">Februari</span>
<span class="t" style="left:108.24px;top:194px;font-size:11px;transform:scaleX(0.9448);color:#161616;">350</span>
<span class="t" style="left:19.38px;top:210px;font-size:11px;letter-spacing:0.194px;transform:scaleX(1.0400);color:#161616;">Maart</span>
<span class="t" style="left:108.08px;top:210px;font-size:11px;transform:scaleX(0.9537);color:#161616;">240</span>
<span class="t" style="left:20.10px;top:226px;font-size:11px;letter-spacing:0.271px;transform:scaleX(1.0400);color:#161616;">April</span>
<span class="t" style="left:108.39px;top:226px;font-size:11px;transform:scaleX(0.9421);color:#161616;">448,5</span>
<span class="t" style="left:19.38px;top:242px;font-size:11px;letter-spacing:0.072px;transform:scaleX(1.0400);color:#161616;">Mei</span>
<span class="t" style="left:108.08px;top:242px;font-size:11px;transform:scaleX(0.9374);color:#161616;">673,65</span>
<svg style="left:0;top:150px" width="210" height="115" viewBox="0 150 210 115"><rect x="17.75" y="157.5" width="177.75" height="97.3" fill="none" stroke="#1e7346" stroke-width="1.7"/><rect x="192.6" y="252.1" width="4.5" height="4.5" fill="#1e7346" stroke="#fff" stroke-width="0.9"/></svg>
<div style="left:226.00px;top:173.00px;width:510.00px;height:482.00px;background:#f0f0f0;border:1px solid #868686;box-shadow:0 4px 12px 1px rgba(0,0,0,.34)"></div>
<div style="left:227.00px;top:174.00px;width:508.00px;height:24.00px;background:#fff"></div>
<span class="t h" style="left:233.83px;top:181px;font-size:9.8px;transform:scaleX(0.9685);color:#000;">Grafiek invoegen</span>
<span class="t" style="left:677.68px;top:181px;font-size:10.5px;transform:scaleX(0.8964);color:#111;font-weight:700;">?</span>
<svg style="left:711px;top:180px" width="11" height="11" viewBox="0 0 11 11"><path d="M1.5 1.2 L9.9 9.6 M9.9 1.2 L1.5 9.6" stroke="#1c1c1c" stroke-width="1.05" fill="none"/></svg>
<div style="left:232.00px;top:207.00px;width:104.00px;height:21.00px;background:#fff;border:1px solid #dadada;border-bottom:none"></div>
<div style="left:234.30px;top:209.30px;width:99.70px;height:13.90px;border:1px dotted #333"></div>
<span class="t h" style="left:238.00px;top:211px;font-size:9.6px;transform:scaleX(0.9829);color:#000;">Aanbevolen grafieken</span>
<div style="left:335.40px;top:208.00px;width:67.20px;height:19.40px;background:#f0f0f0;border:1px solid #d9d9d9;border-left:none;border-bottom:none"></div>
<span class="t h" style="left:339.70px;top:212px;font-size:9.6px;letter-spacing:-0.045px;color:#000;">Alle grafieken</span>
<div style="left:232.00px;top:227.00px;width:497.00px;height:400.00px;background:#fff;border:1px solid #dcdcdc"></div>
<div style="left:233.00px;top:226.80px;width:102.00px;height:1.60px;background:#fff"></div>
<div style="left:242.00px;top:237.00px;width:149.00px;height:380.00px;overflow:hidden"><svg style="left:0;top:0" width="149" height="380" viewBox="242 237 149 380" font-family="Liberation Sans, sans-serif"><rect x="244.15" y="238.6" width="132.0" height="80.7" fill="#fff" stroke="#9fd5b7" stroke-width="3"/><rect x="246.3" y="324.75" width="127.5" height="75.25" fill="#fff" stroke="#e6e6e6" stroke-width="1"/><rect x="246.3" y="408.30" width="127.5" height="75.70" fill="#fff" stroke="#e6e6e6" stroke-width="1"/><rect x="246.3" y="491.90" width="127.5" height="75.30" fill="#fff" stroke="#e6e6e6" stroke-width="1"/><rect x="246.3" y="575.50" width="127.5" height="75.30" fill="#fff" stroke="#e6e6e6" stroke-width="1"/><rect x="378.3" y="237" width="12.7" height="380" fill="#f0f0f0"/><rect x="379" y="250.8" width="11.5" height="320.3" fill="#c9c9c9"/><path d="M381.5 246.2 L384.35 243.1 L387.2 246.2" fill="none" stroke="#404040" stroke-width="1.5"/><path d="M381.5 609.2 L384.35 612.3 L387.2 609.2" fill="none" stroke="#404040" stroke-width="1.5"/><line x1="256.00" y1="309.20" x2="370.60" y2="309.20" stroke="#cdcdcd" stroke-width="0.6"/><text x="252.80" y="310.32" font-size="3.1" text-anchor="end" fill="#505050" font-weight="400">0</text><line x1="256.00" y1="302.21" x2="370.60" y2="302.21" stroke="#cdcdcd" stroke-width="0.6"/><text x="252.80" y="303.33" font-size="3.1" text-anchor="end" fill="#505050" font-weight="400">100</text><line x1="256.00" y1="295.23" x2="370.60" y2="295.23" stroke="#cdcdcd" stroke-width="0.6"/><text x="252.80" y="296.34" font-size="3.1" text-anchor="end" fill="#505050" font-weight="400">200</text><line x1="256.00" y1="288.24" x2="370.60" y2="288.24" stroke="#cdcdcd" stroke-width="0.6"/><text x="252.80" y="289.35" font-size="3.1" text-anchor="end" fill="#505050" font-weight="400">300</text><line x1="256.00" y1="281.25" x2="370.60" y2="281.25" stroke="#cdcdcd" stroke-width="0.6"/><text x="252.80" y="282.37" font-size="3.1" text-anchor="end" fill="#505050" font-weight="400">400</text><line x1="256.00" y1="274.26" x2="370.60" y2="274.26" stroke="#cdcdcd" stroke-width="0.6"/><text x="252.80" y="275.38" font-size="3.1" text-anchor="end" fill="#505050" font-weight="400">500</text><line x1="256.00" y1="267.27" x2="370.60" y2="267.27" stroke="#cdcdcd" stroke-width="0.6"/><text x="252.80" y="268.39" font-size="3.1" text-anchor="end" fill="#505050" font-weight="400">600</text><line x1="256.00" y1="260.29" x2="370.60" y2="260.29" stroke="#cdcdcd" stroke-width="0.6"/><text x="252.80" y="261.40" font-size="3.1" text-anchor="end" fill="#505050" font-weight="400">700</text><line x1="256.00" y1="253.30" x2="370.60" y2="253.30" stroke="#cdcdcd" stroke-width="0.6"/><text x="252.80" y="254.42" font-size="3.1" text-anchor="end" fill="#505050" font-weight="400">800</text><text x="310.20" y="247.20" font-size="4.2" text-anchor="middle" fill="#505050" font-weight="400">Omzet</text><rect x="263.90" y="256.88" width="7.10" height="52.32" fill="#156082"/><text x="267.45" y="314.40" font-size="3.1" text-anchor="middle" fill="#505050" font-weight="400">Januari</text><rect x="286.83" y="284.74" width="7.10" height="24.46" fill="#156082"/><text x="290.38" y="314.40" font-size="3.1" text-anchor="middle" fill="#505050" font-weight="400">Februari</text><rect x="309.76" y="292.43" width="7.10" height="16.77" fill="#156082"/><text x="313.31" y="314.40" font-size="3.1" text-anchor="middle" fill="#505050" font-weight="400">Maart</text><rect x="332.69" y="277.86" width="7.10" height="31.34" fill="#156082"/><text x="336.24" y="314.40" font-size="3.1" text-anchor="middle" fill="#505050" font-weight="400">April</text><rect x="355.62" y="262.13" width="7.10" height="47.07" fill="#156082"/><text x="359.17" y="314.40" font-size="3.1" text-anchor="middle" fill="#505050" font-weight="400">Mei</text><line x1="255.80" y1="392.60" x2="370.40" y2="392.60" stroke="#cdcdcd" stroke-width="0.6"/><text x="252.80" y="393.72" font-size="3.1" text-anchor="end" fill="#505050" font-weight="400">0</text><line x1="255.80" y1="385.68" x2="370.40" y2="385.68" stroke="#cdcdcd" stroke-width="0.6"/><text x="252.80" y="386.79" font-size="3.1" text-anchor="end" fill="#505050" font-weight="400">100</text><line x1="255.80" y1="378.75" x2="370.40" y2="378.75" stroke="#cdcdcd" stroke-width="0.6"/><text x="252.80" y="379.87" font-size="3.1" text-anchor="end" fill="#505050" font-weight="400">200</text><line x1="255.80" y1="371.82" x2="370.40" y2="371.82" stroke="#cdcdcd" stroke-width="0.6"/><text x="252.80" y="372.94" font-size="3.1" text-anchor="end" fill="#505050" font-weight="400">300</text><line x1="255.80" y1="364.90" x2="370.40" y2="364.90" stroke="#cdcdcd" stroke-width="0.6"/><text x="252.80" y="366.02" font-size="3.1" text-anchor="end" fill="#505050" font-weight="400">400</text><line x1="255.80" y1="357.98" x2="370.40" y2="357.98" stroke="#cdcdcd" stroke-width="0.6"/><text x="252.80" y="359.09" font-size="3.1" text-anchor="end" fill="#505050" font-weight="400">500</text><line x1="255.80" y1="351.05" x2="370.40" y2="351.05" stroke="#cdcdcd" stroke-width="0.6"/><text x="252.80" y="352.17" font-size="3.1" text-anchor="end" fill="#505050" font-weight="400">600</text><line x1="255.80" y1="344.12" x2="370.40" y2="344.12" stroke="#cdcdcd" stroke-width="0.6"/><text x="252.80" y="345.24" font-size="3.1" text-anchor="end" fill="#505050" font-weight="400">700</text><line x1="255.80" y1="337.20" x2="370.40" y2="337.20" stroke="#cdcdcd" stroke-width="0.6"/><text x="252.80" y="338.32" font-size="3.1" text-anchor="end" fill="#505050" font-weight="400">800</text><text x="310.10" y="331.00" font-size="4.2" text-anchor="middle" fill="#505050" font-weight="400">Omzet</text><polyline points="267.50,340.75 290.32,368.36 313.14,375.98 335.96,361.54 358.78,345.95" fill="none" stroke="#2d7396" stroke-width="1.05" stroke-linejoin="round" stroke-linecap="round"/><text x="267.50" y="397.90" font-size="3.1" text-anchor="middle" fill="#505050" font-weight="400">Januari</text><text x="290.32" y="397.90" font-size="3.1" text-anchor="middle" fill="#505050" font-weight="400">Februari</text><text x="313.14" y="397.90" font-size="3.1" text-anchor="middle" fill="#505050" font-weight="400">Maart</text><text x="335.96" y="397.90" font-size="3.1" text-anchor="middle" fill="#505050" font-weight="400">April</text><text x="358.78" y="397.90" font-size="3.1" text-anchor="middle" fill="#505050" font-weight="400">Mei</text><text x="310.10" y="414.20" font-size="4.2" text-anchor="middle" fill="#505050" font-weight="400">Omzet</text><path d="M310.00 446.60 L310.00 420.70 A25.90 25.90 0 0 1 334.41 455.26 Z" fill="#156082" stroke="#fff" stroke-width="0.7" stroke-linejoin="round"/><path d="M310.00 446.60 L334.41 455.26 A25.90 25.90 0 0 1 318.55 471.05 Z" fill="#e97132" stroke="#fff" stroke-width="0.7" stroke-linejoin="round"/><path d="M310.00 446.60 L318.55 471.05 A25.90 25.90 0 0 1 302.93 471.52 Z" fill="#196b24" stroke="#fff" stroke-width="0.7" stroke-linejoin="round"/><path d="M310.00 446.60 L302.93 471.52 A25.90 25.90 0 0 1 284.39 450.45 Z" fill="#0f9ed5" stroke="#fff" stroke-width="0.7" stroke-linejoin="round"/><path d="M310.00 446.60 L284.39 450.45 A25.90 25.90 0 0 1 310.00 420.70 Z" fill="#a02b93" stroke="#fff" stroke-width="0.7" stroke-linejoin="round"/><rect x="280.20" y="478.6" width="1.2" height="1.2" fill="#156082"/><text x="282.10" y="480.50" font-size="3.0" text-anchor="start" fill="#505050" font-weight="400">Januari</text><rect x="293.20" y="478.6" width="1.2" height="1.2" fill="#e97132"/><text x="295.10" y="480.50" font-size="3.0" text-anchor="start" fill="#505050" font-weight="400">Februari</text><rect x="307.40" y="478.6" width="1.2" height="1.2" fill="#196b24"/><text x="309.30" y="480.50" font-size="3.0" text-anchor="start" fill="#505050" font-weight="400">Maart</text><rect x="318.80" y="478.6" width="1.2" height="1.2" fill="#0f9ed5"/><text x="320.70" y="480.50" font-size="3.0" text-anchor="start" fill="#505050" font-weight="400">April</text><rect x="329.00" y="478.6" width="1.2" height="1.2" fill="#a02b93"/><text x="330.90" y="480.50" font-size="3.0" text-anchor="start" fill="#505050" font-weight="400">Mei</text><line x1="255.80" y1="559.75" x2="367.90" y2="559.75" stroke="#cdcdcd" stroke-width="0.6"/><text x="252.80" y="560.87" font-size="3.1" text-anchor="end" fill="#505050" font-weight="400">0</text><line x1="255.80" y1="552.82" x2="367.90" y2="552.82" stroke="#cdcdcd" stroke-width="0.6"/><text x="252.80" y="553.93" font-size="3.1" text-anchor="end" fill="#505050" font-weight="400">100</text><line x1="255.80" y1="545.89" x2="367.90" y2="545.89" stroke="#cdcdcd" stroke-width="0.6"/><text x="252.80" y="547.00" font-size="3.1" text-anchor="end" fill="#505050" font-weight="400">200</text><line x1="255.80" y1="538.96" x2="367.90" y2="538.96" stroke="#cdcdcd" stroke-width="0.6"/><text x="252.80" y="540.07" font-size="3.1" text-anchor="end" fill="#505050" font-weight="400">300</text><line x1="255.80" y1="532.02" x2="367.90" y2="532.02" stroke="#cdcdcd" stroke-width="0.6"/><text x="252.80" y="533.14" font-size="3.1" text-anchor="end" fill="#505050" font-weight="400">400</text><line x1="255.80" y1="525.09" x2="367.90" y2="525.09" stroke="#cdcdcd" stroke-width="0.6"/><text x="252.80" y="526.21" font-size="3.1" text-anchor="end" fill="#505050" font-weight="400">500</text><line x1="255.80" y1="518.16" x2="367.90" y2="518.16" stroke="#cdcdcd" stroke-width="0.6"/><text x="252.80" y="519.28" font-size="3.1" text-anchor="end" fill="#505050" font-weight="400">600</text><line x1="255.80" y1="511.23" x2="367.90" y2="511.23" stroke="#cdcdcd" stroke-width="0.6"/><text x="252.80" y="512.35" font-size="3.1" text-anchor="end" fill="#505050" font-weight="400">700</text><line x1="255.80" y1="504.30" x2="367.90" y2="504.30" stroke="#cdcdcd" stroke-width="0.6"/><text x="252.80" y="505.42" font-size="3.1" text-anchor="end" fill="#505050" font-weight="400">800</text><text x="310.10" y="497.80" font-size="4.2" text-anchor="middle" fill="#505050" font-weight="400">Omzet</text><polygon points="255.80,559.75 255.80,507.85 283.83,535.49 311.86,543.12 339.89,528.66 367.92,513.06 367.92,559.75" fill="#156082"/><text x="255.80" y="565.00" font-size="3.1" text-anchor="middle" fill="#505050" font-weight="400">Januari</text><text x="283.83" y="565.00" font-size="3.1" text-anchor="middle" fill="#505050" font-weight="400">Februari</text><text x="311.86" y="565.00" font-size="3.1" text-anchor="middle" fill="#505050" font-weight="400">Maart</text><text x="339.89" y="565.00" font-size="3.1" text-anchor="middle" fill="#505050" font-weight="400">April</text><text x="367.92" y="565.00" font-size="3.1" text-anchor="middle" fill="#505050" font-weight="400">Mei</text><text x="309.80" y="581.00" font-size="4.2" text-anchor="middle" fill="#505050" font-weight="400">Grafiektitel</text><rect x="260.8" y="585.4" width="111.30" height="10.90" fill="#156082"/><text x="316.45" y="591.95" font-size="3.1" text-anchor="middle" fill="#fff" font-weight="400">748,75</text><text x="258.60" y="591.95" font-size="3.1" text-anchor="end" fill="#505050" font-weight="400">Januari</text><rect x="290.8" y="598.3" width="51.30" height="11.30" fill="#156082"/><text x="316.45" y="605.05" font-size="3.1" text-anchor="middle" fill="#fff" font-weight="400">350</text><text x="258.60" y="605.05" font-size="3.1" text-anchor="end" fill="#505050" font-weight="400">Februari</text><rect x="299.2" y="612.1" width="35.00" height="10.90" fill="#156082"/><text x="316.70" y="618.65" font-size="3.1" text-anchor="middle" fill="#fff" font-weight="400">240</text><text x="258.60" y="618.65" font-size="3.1" text-anchor="end" fill="#505050" font-weight="400">Maart</text></svg></div>
<span class="t" style="left:403.07px;top:241px;font-size:12.5px;letter-spacing:0.093px;color:#1a1a1a;">Gegroepeerde kolom</span>
<div style="left:402.30px;top:257.90px;width:303.70px;height:182.90px;border:1px solid #e2e2e2;border-left:none;border-bottom-color:#f3f3f3;background:#fff"></div>
<svg style="left:0;top:0" width="768" height="672" viewBox="0 0 768 672" font-family="Liberation Sans, sans-serif"><line x1="425.80" y1="420.80" x2="696.30" y2="420.80" stroke="#dbdbdb" stroke-width="0.9"/><text x="418.40" y="423.21" font-size="6.7" text-anchor="end" fill="#505050" font-weight="400">0</text><line x1="425.80" y1="404.29" x2="696.30" y2="404.29" stroke="#dbdbdb" stroke-width="0.9"/><text x="418.40" y="406.71" font-size="6.7" text-anchor="end" fill="#505050" font-weight="400">100</text><line x1="425.80" y1="387.79" x2="696.30" y2="387.79" stroke="#dbdbdb" stroke-width="0.9"/><text x="418.40" y="390.20" font-size="6.7" text-anchor="end" fill="#505050" font-weight="400">200</text><line x1="425.80" y1="371.28" x2="696.30" y2="371.28" stroke="#dbdbdb" stroke-width="0.9"/><text x="418.40" y="373.69" font-size="6.7" text-anchor="end" fill="#505050" font-weight="400">300</text><line x1="425.80" y1="354.77" x2="696.30" y2="354.77" stroke="#dbdbdb" stroke-width="0.9"/><text x="418.40" y="357.19" font-size="6.7" text-anchor="end" fill="#505050" font-weight="400">400</text><line x1="425.80" y1="338.27" x2="696.30" y2="338.27" stroke="#dbdbdb" stroke-width="0.9"/><text x="418.40" y="340.68" font-size="6.7" text-anchor="end" fill="#505050" font-weight="400">500</text><line x1="425.80" y1="321.76" x2="696.30" y2="321.76" stroke="#dbdbdb" stroke-width="0.9"/><text x="418.40" y="324.17" font-size="6.7" text-anchor="end" fill="#505050" font-weight="400">600</text><line x1="425.80" y1="305.26" x2="696.30" y2="305.26" stroke="#dbdbdb" stroke-width="0.9"/><text x="418.40" y="307.67" font-size="6.7" text-anchor="end" fill="#505050" font-weight="400">700</text><line x1="425.80" y1="288.75" x2="696.30" y2="288.75" stroke="#dbdbdb" stroke-width="0.9"/><text x="418.40" y="291.16" font-size="6.7" text-anchor="end" fill="#505050" font-weight="400">800</text><text x="554.10" y="275.80" font-size="10.5" text-anchor="middle" fill="#505050" font-weight="400">Omzet</text><rect x="444.20" y="297.21" width="17.10" height="123.59" fill="#156082"/><text x="452.75" y="432.00" font-size="6.6" text-anchor="middle" fill="#505050" font-weight="400">Januari</text><rect x="498.32" y="363.03" width="17.10" height="57.77" fill="#156082"/><text x="506.87" y="432.00" font-size="6.6" text-anchor="middle" fill="#505050" font-weight="400">Februari</text><rect x="552.44" y="381.19" width="17.10" height="39.62" fill="#156082"/><text x="560.99" y="432.00" font-size="6.6" text-anchor="middle" fill="#505050" font-weight="400">Maart</text><rect x="606.56" y="346.77" width="17.10" height="74.03" fill="#156082"/><text x="615.11" y="432.00" font-size="6.6" text-anchor="middle" fill="#505050" font-weight="400">April</text><rect x="660.68" y="309.61" width="17.10" height="111.19" fill="#156082"/><text x="669.23" y="432.00" font-size="6.6" text-anchor="middle" fill="#505050" font-weight="400">Mei</text></svg>
<span class="t h" style="left:402.96px;top:449px;font-size:9.35px;letter-spacing:0.063px;color:#000;">In een gegroepeerd kolomdiagram worden waarden uit enkele categorieën</span>
<span class="t h" style="left:403.80px;top:459px;font-size:9.35px;letter-spacing:0.008px;color:#000;">vergeleken. Gebruik dit diagram wanneer de volgorde van categorieën niet</span>
<span class="t h" style="left:403.24px;top:470px;font-size:9.35px;letter-spacing:0.155px;color:#000;">belangrijk is.</span>
<div style="left:604.00px;top:631.00px;width:58.00px;height:16.80px;background:#e1e1e1;border:1.4px solid #0078d4"></div>
<span class="t h" style="left:625.37px;top:635px;font-size:9.8px;transform:scaleX(0.9817);color:#000;">OK</span>
<div style="left:667.00px;top:631.20px;width:62.30px;height:16.30px;background:#e1e1e1;border:1px solid #adadad"></div>
<span class="t h" style="left:678.20px;top:635px;font-size:9.8px;transform:scaleX(0.9800);color:#000;">Annuleren</span>
<svg style="left:728px;top:646.5px" width="6" height="6" viewBox="0 0 6 6"><rect x="4" y="0" width="1.2" height="1.2" fill="#9a9a9a"/><rect x="2" y="2" width="1.2" height="1.2" fill="#9a9a9a"/><rect x="4" y="2" width="1.2" height="1.2" fill="#9a9a9a"/><rect x="0" y="4" width="1.2" height="1.2" fill="#9a9a9a"/><rect x="2" y="4" width="1.2" height="1.2" fill="#9a9a9a"/><rect x="4" y="4" width="1.2" height="1.2" fill="#9a9a9a"/></svg>
<svg style="left:0;top:0" width="768" height="672" viewBox="0 0 768 672"><path d="M75.5 1.0H148.0V35.0H75.5Z M83.4 9.05V27.2H139.8V9.05Z M491.5 23.3H570.3V96.9H491.5Z M499.4 31.1V89.1H562.3V31.1Z M594.5 617.5H673.1V660.6H594.5Z M602.2 625.3V652.8H665.1V625.3Z" fill="#ed1c24" fill-rule="evenodd"/></svg>
</div>
</body>
</html>
